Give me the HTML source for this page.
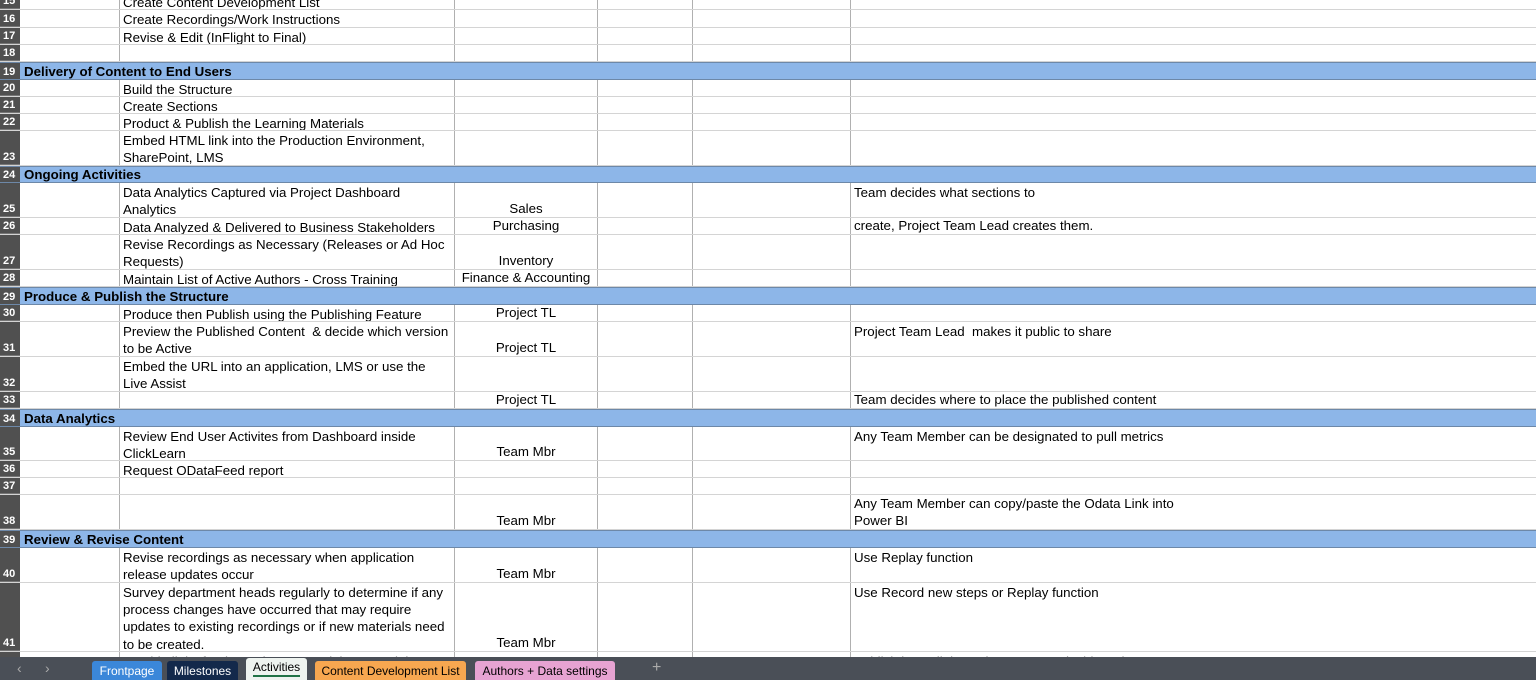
<!DOCTYPE html>
<html><head><meta charset="utf-8"><style>
*{margin:0;padding:0;box-sizing:border-box}
html,body{width:1536px;height:680px;overflow:hidden}
body{background:#fff;font-family:"Liberation Sans",Arial,sans-serif;font-size:13.3px;color:#000;position:relative}
.r{position:absolute;left:0;width:1536px;border-bottom:1px solid #d4d4d4}
.c{position:absolute;top:0;bottom:0;overflow:hidden;white-space:nowrap;line-height:17.2px;display:flex;flex-direction:column;justify-content:flex-end;padding:1px 3px 0 3px}
.h{left:0;width:20px;background:#505050;color:#fff;font-size:11px;font-weight:bold;line-height:14px;padding:0 0 0 3px;border-bottom:1px solid #777}
.a{left:20px;width:100px;border-right:1px solid #b0b0b0}
.b{left:120px;width:335px;border-right:1px solid #b0b0b0}
.cc{left:455px;width:143px;border-right:1px solid #b0b0b0;text-align:center;align-items:center;padding-bottom:0}
.d{left:598px;width:95px;border-right:1px solid #b0b0b0}
.e{left:693px;width:158px;border-right:1px solid #b0b0b0}
.f{left:851px;width:685px;justify-content:flex-start}
.f.fb{justify-content:flex-end}
.s{background:#8db6e8;border-top:1px solid #6d88a8;border-bottom:1px solid #6d88a8}
.s .t{position:absolute;left:24px;bottom:-1px;font-weight:bold;line-height:17px}
#tabs{position:absolute;left:0;top:657px;width:1536px;height:23px;background:#4a4f57}
.tab{position:absolute;top:4px;height:19px;font-size:12px;line-height:21px;text-align:center;border-radius:3px 3px 0 0}
</style></head><body>
<div id="g"></div>
<script>
const rows=[
[15,-7,17,'','Create Content Development List','','',''],
[16,10,18,'','Create Recordings/Work Instructions','','',''],
[17,28,17,'','Revise &amp; Edit (InFlight to Final)','','',''],
[18,45,17,'','','','',''],
[19,62,18,'S','Delivery of Content to End Users'],
[20,80,17,'','Build the Structure','','',''],
[21,97,17,'','Create Sections','','',''],
[22,114,17,'','Product &amp; Publish the Learning Materials','','',''],
[23,131,35,'','Embed HTML link into the Production Environment,<br>SharePoint, LMS','','',''],
[24,166,17,'S','Ongoing Activities'],
[25,183,35,'','Data Analytics Captured via Project Dashboard<br>Analytics','Sales','Team decides what sections to',''],
[26,218,17,'','Data Analyzed &amp; Delivered to Business Stakeholders','Purchasing','create, Project Team Lead creates them.','fb'],
[27,235,35,'','Revise Recordings as Necessary (Releases or Ad Hoc<br>Requests)','Inventory','',''],
[28,270,17,'','Maintain List of Active Authors - Cross Training','Finance &amp; Accounting','',''],
[29,287,18,'S','Produce &amp; Publish the Structure'],
[30,305,17,'','Produce then Publish using the Publishing Feature','Project TL','',''],
[31,322,35,'','Preview the Published Content &nbsp;&amp; decide which version<br>to be Active','Project TL','Project Team Lead &nbsp;makes it public to share',''],
[32,357,35,'','Embed the URL into an application, LMS or use the<br>Live Assist','','',''],
[33,392,17,'','','Project TL','Team decides where to place the published content','fb'],
[34,409,18,'S','Data Analytics'],
[35,427,34,'','Review End User Activites from Dashboard inside<br>ClickLearn','Team Mbr','Any Team Member can be designated to pull metrics',''],
[36,461,17,'','Request ODataFeed report','','',''],
[37,478,17,'','','','',''],
[38,495,35,'','','Team Mbr','Any Team Member can copy/paste the Odata Link into<br>Power BI','fb'],
[39,530,18,'S','Review &amp; Revise Content'],
[40,548,35,'','Revise recordings as necessary when application<br>release updates occur','Team Mbr','Use Replay function',''],
[41,583,69,'','Survey department heads regularly to determine if any<br>process changes have occurred that may require<br>updates to existing recordings or if new materials need<br>to be created.','Team Mbr','Use Record new steps or Replay function',''],
[42,652,28,'','<span style="color:#666">Provide links for the end user to training materials</span>','','<span style="color:#666">Publish latest links to the Power BI dashboard</span>','']
];
let h='';
for(const r of rows){
 const [n,y,ht,t,b,c,f,fb]=r;
 if(t==='S'){h+=`<div class="r s" style="top:${y}px;height:${ht}px"><div class="c h" style="border-bottom:none">${n}</div><div class="t">${b}</div></div>`;continue;}
 h+=`<div class="r" style="top:${y}px;height:${ht}px"><div class="c h">${n}</div><div class="c a"></div><div class="c b" style="justify-content:flex-start">${b}</div><div class="c cc">${c}</div><div class="c d"></div><div class="c e"></div><div class="c f ${fb}">${f}</div></div>`;
}
document.getElementById('g').innerHTML=h;
</script>
<div id="tabs">
<span style="position:absolute;left:17px;top:3px;color:#aaa;font-size:14px">&#8249;</span>
<span style="position:absolute;left:45px;top:3px;color:#aaa;font-size:14px">&#8250;</span>
<div class="tab" style="left:92px;width:70px;background:#3b87d9;color:#fff">Frontpage</div>
<div class="tab" style="left:167px;width:71px;background:#13294b;color:#fff">Milestones</div>
<div class="tab" style="left:246px;width:61px;background:#eef3ef;color:#000;line-height:19px;top:1px;height:22px">Activities<div style="position:absolute;left:7px;right:7px;bottom:3px;height:2px;background:#217346"></div></div>
<div class="tab" style="left:315px;width:151px;background:#f7a750;color:#000">Content Development List</div>
<div class="tab" style="left:475px;width:140px;background:#e7a3d2;color:#000">Authors + Data settings</div>
<span style="position:absolute;left:652px;top:2px;color:#aaa;font-size:16px">+</span>
</div>
</body></html>
